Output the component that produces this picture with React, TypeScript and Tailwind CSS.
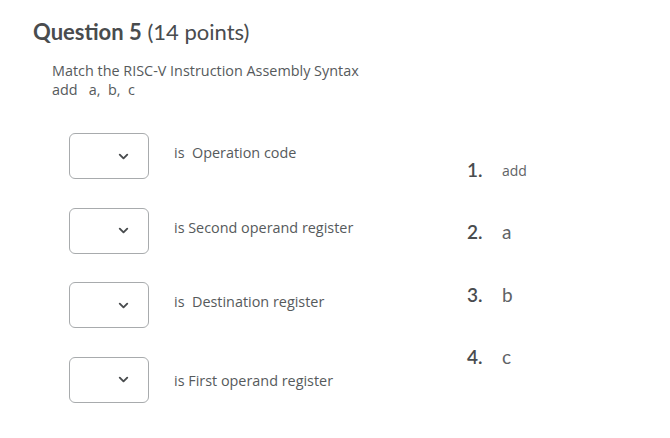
import { ChevronDown } from 'lucide-react';

const rows = [
  { label: 'is\u00a0 Operation code', shift: '-mt-[6px]' },
  { label: 'is Second operand register', shift: '-mt-[6px]' },
  { label: 'is\u00a0 Destination register', shift: '-mt-[6px]' },
  { label: 'is First operand register', shift: 'mt-[3px]' },
];

const answers = [
  { n: '1.', text: 'add', cls: 'text-[14px] font-["Open_Sans",sans-serif]' },
  { n: '2.', text: 'a', cls: 'text-[19px]' },
  { n: '3.', text: 'b', cls: 'text-[19px]' },
  { n: '4.', text: 'c', cls: 'text-[19px]' },
];

export default function App() {
  return (
    <div className="h-[438px] w-[670px] bg-white pl-[33px] pt-[18px] font-['Lato',sans-serif] text-[#494c4e]">
      <h1 className="text-[22px] leading-[28px]">
        <span className="font-bold">Question 5</span> <span>(14 points)</span>
      </h1>

      <div className="ml-[19px] mt-[15px] font-['Open_Sans',sans-serif] text-[14.4px] leading-[19px] text-[#565a5c]">
        <p>Match the RISC-V Instruction Assembly Syntax</p>
        <p className="whitespace-pre">add   a,  b,  c</p>
      </div>

      <div className="mt-[34px] flex">
        <div className="ml-[36px] flex w-[398px] flex-col gap-[28.5px]">
          {rows.map((r) => (
            <div key={r.label} className="flex items-center">
              <div className="flex h-[46px] w-[80px] items-center justify-end rounded-[6px] border border-[#a8abad] pr-[17px]">
                <ChevronDown size={15} strokeWidth={3} className="text-[#494c4e]" />
              </div>
              <span className={`ml-[25px] font-['Open_Sans',sans-serif] text-[14.4px] text-[#565a5c] ${r.shift}`}>
                {r.label}
              </span>
            </div>
          ))}
        </div>

        <ol className="mt-[24px] flex flex-col gap-[36.5px]">
          {answers.map((a) => (
            <li key={a.n} className="flex h-[26px] items-center">
              <span className="w-[35px] text-[19px] font-semibold text-[#494c4e]">{a.n}</span>
              <span className={`text-[#5f6366] ${a.cls}`}>{a.text}</span>
            </li>
          ))}
        </ol>
      </div>
    </div>
  );
}
